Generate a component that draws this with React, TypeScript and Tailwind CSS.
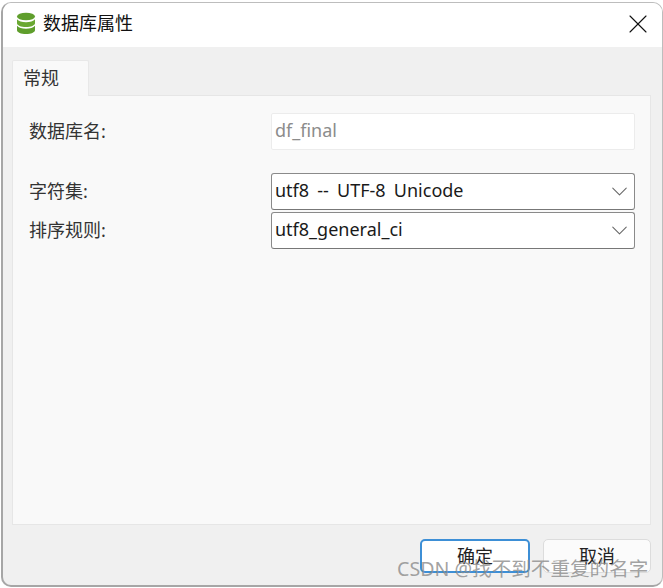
import React from 'react';
import { ChevronDown, X } from 'lucide-react';

const font = 'font-["Noto_Sans","Noto_Sans_CJK_SC",sans-serif]';

function DbIcon() {
  return (
    <svg width="20" height="23" viewBox="0 0 20 23" className="shrink-0">
      <ellipse cx="10" cy="4.500" rx="9" ry="3.800" fill="#5f9e2c" />
      <path d="M1 7.200c1.500 2 5 3 9 3s7.500-1 9-3v4c0 2.100-4 3.800-9 3.800s-9-1.700-9-3.800z" fill="#6aa832" />
      <path d="M1 13.700c1.500 2 5 3 9 3s7.500-1 9-3v4.500c0 2.100-4 3.800-9 3.800s-9-1.700-9-3.800z" fill="#5f9e2c" />
    </svg>
  );
}

function Row({ label, className, children }: { label: string; className?: string; children: React.ReactNode }) {
  return (
    <div className={`flex items-center ${className ?? ''}`}>
      <div className="w-[242px] text-[18px] text-[#333]">{label}</div>
      {children}
    </div>
  );
}

function Select({ value }: { value: string }) {
  return (
    <div className="flex h-[37px] w-[364px] items-center justify-between rounded-[3px] border border-[#8a8a8a] border-b-[#777] bg-white pl-[3px] pr-[1px] text-[18px] text-[#1a1a1a]">
      <span className="pb-[2px] [word-spacing:3.500px]">{value}</span>
      <ChevronDown size={27} strokeWidth={0.9} className="text-[#666]" />
    </div>
  );
}

export default function App() {
  return (
    <div className={`relative h-[588px] w-[663px] overflow-hidden bg-white ${font}`}>
      <div className="ml-px mt-[2px] flex h-[585px] w-[662px] flex-col overflow-hidden rounded-[10px] border border-[#bdbdbd] border-b-2 border-b-[#a6a6a6] border-l-2 border-l-[#a6a6a6] bg-[#f0f0f0]">
        {/* 标题栏 */}
        <div className="flex h-[44px] items-center justify-between bg-white pb-[3px] pl-[13px] pr-[8px]">
          <div className="flex items-center gap-[7px]">
            <DbIcon />
            <span className="text-[18px] text-[#111]">数据库属性</span>
          </div>
          <X size={32} strokeWidth={0.85} className="text-[#111]" />
        </div>

        {/* 内容 */}
        <div className="flex flex-1 flex-col pl-[9px] pr-[11px] pt-[13px]">
          <div className="relative z-10 -mb-px flex h-[36px] w-[77px] items-center rounded-t-[2px] border border-b-0 border-[#e8e8e8] bg-[#f9f9f9] pl-[10px] text-[18px] text-[#333]">
            常规
          </div>
          <div className="h-[430px] border border-[#e6e6e6] bg-[#f9f9f9] pl-[16px] pt-[17px]">
            <Row label="数据库名:">
              <div className="flex h-[37px] w-[364px] items-center rounded-[2px] border border-[#ececec] bg-white pb-[2px] pl-[3px] text-[18px] text-[#8c8c8c]">
                df_final
              </div>
            </Row>
            <Row label="字符集:" className="mt-[23px]">
              <Select value="utf8 -- UTF-8 Unicode" />
            </Row>
            <Row label="排序规则:" className="mt-[2px]">
              <Select value="utf8_general_ci" />
            </Row>
          </div>

          {/* 按钮 */}
          <div className="mt-[14px] flex justify-end gap-[13px]">
            <button className="h-[34px] w-[110px] rounded-[5px] border-2 border-[#3d8fd6] bg-white text-[18px] leading-[28px] text-[#222]">确定</button>
            <button className="h-[34px] w-[108px] rounded-[5px] border border-[#dcdcdc] bg-[#fbfbfb] text-[18px] leading-[28px] text-[#222]">取消</button>
          </div>
        </div>
      </div>

      {/* 水印 */}
      <div className="absolute left-[397px] top-[558px] whitespace-nowrap text-[19.600px] leading-[22px] text-[#8a8a8a]/80">
        CSDN @找不到不重复的名字
      </div>
    </div>
  );
}
